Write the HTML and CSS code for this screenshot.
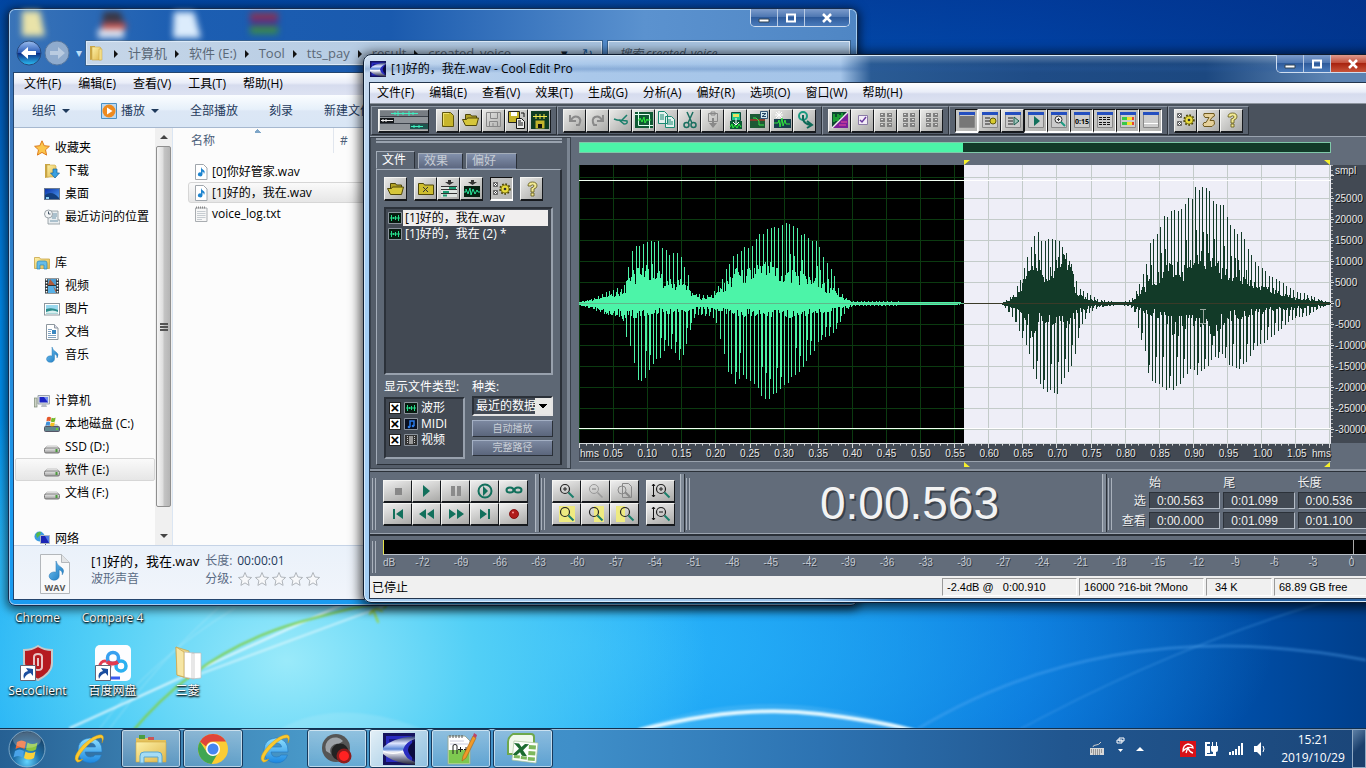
FILE: index.html
```html
<!DOCTYPE html>
<html lang="zh-CN">
<head>
    <meta charset="UTF-8">
    <meta name="viewport" content="width=device-width, initial-scale=1.0">
    <title>Cool Edit Pro</title>
    <link rel="stylesheet" href="styles.css">
</head>
<body>
    <!-- 图标库 -->
    <svg class="sprite" aria-hidden="true">
        <defs>
            <linearGradient id="g-folder" x1="0" y1="0" x2="1" y2="1"><stop offset="0" stop-color="#fdf1a8"/><stop offset="1" stop-color="#dfb64a"/></linearGradient>
            <linearGradient id="g-blue" x1="0" y1="0" x2="1" y2="1"><stop offset="0" stop-color="#7cc8f5"/><stop offset="1" stop-color="#1274bd"/></linearGradient>
            <linearGradient id="g-ie" x1="0" y1="0" x2="0" y2="1"><stop offset="0" stop-color="#8fe0ff"/><stop offset="1" stop-color="#1a86e0"/></linearGradient>
            <linearGradient id="g-screen" x1="0" y1="0" x2="1" y2="1"><stop offset="0" stop-color="#0a2fa8"/><stop offset="1" stop-color="#4ea0f0"/></linearGradient>
            <linearGradient id="g-drive" x1="0" y1="0" x2="0" y2="1"><stop offset="0" stop-color="#eeeeee"/><stop offset="1" stop-color="#999999"/></linearGradient>
            <radialGradient id="g-orb" cx=".5" cy=".85" r=".9"><stop offset="0" stop-color="#63d4ff"/><stop offset=".4" stop-color="#1f6fa8"/><stop offset="1" stop-color="#16314e"/></radialGradient>
            <linearGradient id="g-nav" x1="0" y1="0" x2="0" y2="1"><stop offset="0" stop-color="#9dbff0"/><stop offset=".48" stop-color="#2a5cb8"/><stop offset=".52" stop-color="#0b2f86"/><stop offset="1" stop-color="#2cc0f5"/></linearGradient>
            <linearGradient id="g-chrome" x1="0" y1="0" x2="0" y2="1"><stop offset="0" stop-color="#20306a"/><stop offset=".25" stop-color="#dfe6ff"/><stop offset=".45" stop-color="#5a86d8"/><stop offset=".55" stop-color="#f4f4fa"/><stop offset=".75" stop-color="#8c90a8"/><stop offset="1" stop-color="#1c1c30"/></linearGradient>
        </defs>
        <symbol id="star" viewBox="0 0 16 16"><path d="M8 .8l2.200 4.900 5.200.6-3.900 3.500 1.100 5.300L8 12.400l-4.600 2.700 1.100-5.300L.6 6.300l5.200-.6z" fill="#fbc64c" stroke="#dd7b1c"/></symbol>
        <symbol id="star-empty" viewBox="0 0 16 16"><path d="M8 1.500l1.900 4.500 4.700.5-3.500 3.100 1 4.800L8 11.900l-4.100 2.500 1-4.800-3.500-3.100 4.700-.5z" fill="#f7f8fa" stroke="#b0b5bb"/></symbol>
        <symbol id="folder" viewBox="0 0 16 16"><path d="M1 1h5v13l-5 1z" fill="#c9a545"/><path d="M3 2h8l1 1v12H3z" fill="url(#g-folder)" stroke="#c9a545" stroke-width=".6"/><path d="M10 4h3v11h-3z" fill="#f3dd86" stroke="#c9a545" stroke-width=".5"/></symbol>
        <symbol id="download" viewBox="0 0 16 16"><path d="M1 1h5v13l-5 1z" fill="#c9a545"/><path d="M3 2h8l1 1v11H3z" fill="url(#g-folder)" stroke="#c9a545" stroke-width=".6"/><path d="M9 6h4v4h2.500L11 15 6.500 10H9z" fill="#3aa0e0" stroke="#14639c" stroke-width=".7"/></symbol>
        <symbol id="desk" viewBox="0 0 16 16"><rect x=".5" y="2.500" width="15" height="11" fill="url(#g-screen)" stroke="#6a7a90"/><path d="M1 9q7-5 14 3v1H1z" fill="#123f7d"/><path d="M2 11h3v2H2z" fill="#8fd0f5"/></symbol>
        <symbol id="recent" viewBox="0 0 16 16"><path d="M5 2h9v9h2v4H4V7z" fill="#e8edf0" stroke="#8b949b" stroke-width=".8"/><path d="M8 5h5M8 7h5M8 9h4M6 12h8" stroke="#6e94aa"/><circle cx="4.500" cy="5" r="4" fill="#f4f6f7" stroke="#9aa2a8"/><path d="M4.500 2.500V5h2" stroke="#456" fill="none"/></symbol>
        <symbol id="library" viewBox="0 0 16 16"><path d="M.5 2.500h5l1 1.500h9v9.500H.5z" fill="url(#g-folder)" stroke="#c9a545" stroke-width=".8"/><path d="M3 14V8q0-2 2-2h6q2 0 2 2v6h-3V10H6v4z" fill="#66bce8" stroke="#2c86b8" stroke-width=".7"/></symbol>
        <symbol id="video" viewBox="0 0 16 16"><rect x="1" y=".5" width="14" height="15" fill="#2d3438"/><path d="M4 1h8v6H4z" fill="#4b9bd0"/><path d="M4 8h8v7H4z" fill="#57b0e6"/><path d="M6 1l5 6H4zM9 8l3 4v3z" fill="#b05a3a"/><path d="M2.500 1v14M13.500 1v14" stroke="#fff" stroke-width="1.500" stroke-dasharray="1.500 1.500"/></symbol>
        <symbol id="picture" viewBox="0 0 16 16"><rect x=".5" y="2.500" width="15" height="11.500" fill="#fff" stroke="#8d979e"/><path d="M2 4h12v8.500H2z" fill="#9ad8ee"/><path d="M2 8q6-2 12 1v3.500H2z" fill="#2c8c8c"/><path d="M2 11q7-3 12 0v1.500H2z" fill="#d7efef"/></symbol>
        <symbol id="doc" viewBox="0 0 16 16"><path d="M2.500.5h8l3.500 3.500v11.500H2.500z" fill="#fff" stroke="#8d979e"/><path d="M10.500.5V4H14" fill="#dde" stroke="#8d979e"/><path d="M4 5.500h4M4 7.500h3M4 9.500h3M4 11.500h8M4 13.500h8" stroke="#7fa2c0"/><path d="M8 6h4v4H8z" fill="#3b87c0"/></symbol>
        <symbol id="note" viewBox="0 0 16 16"><path d="M8 0q.5 3 4 5t1 6q.5-3-2.500-4v5a4 3.300 0 1 1-2.500-3z" fill="url(#g-blue)" stroke="#1d6fae" stroke-width=".4"/></symbol>
        <symbol id="computer" viewBox="0 0 16 16"><path d="M4 2.500h11.500V11H4z" fill="#dfe3e8" stroke="#9aa3ad"/><path d="M5.500 4H14v5.500H5.500z" fill="#1d24c4"/><path d="M10 4h4v5.500z" fill="#6f8cf0"/><path d="M8 11h4l1 3H7z" fill="#b8bdc4"/><rect x=".5" y="5" width="2.500" height="9" fill="#ccd2c6" stroke="#7d8a76" stroke-width=".7"/></symbol>
        <symbol id="drive" viewBox="0 0 16 16"><path d="M3 7h10l2.500 2.500h-15z" fill="#f1f1f1" stroke="#a9a9a9" stroke-width=".6"/><rect x=".5" y="9" width="15" height="5" rx="1.500" fill="url(#g-drive)" stroke="#777"/><path d="M11.500 10h2v3h-2z" fill="#4c9a3c"/></symbol>
        <symbol id="sysdrive" viewBox="0 0 16 16"><path d="M2 8h11l2.500 3h-15z" fill="#c9ced1"/><rect x=".5" y="10.500" width="15" height="5" rx="1" fill="#62878f" stroke="#556"/><path d="M12 12h2v2h-2z" fill="#6c3"/><path d="M3 1.500q2-1.500 4 0l-.6 4q-2-1.500-4 0z" fill="#e5582b"/><path d="M7.600 1.700q2 1 4-.2l-.7 4q-2 1.200-4 0z" fill="#76b82a"/><path d="M2.200 6.200q2-1.500 4 0l-.6 3.500q-2-1-4 0z" fill="#3f8fd8"/><path d="M6.800 6.400q2 1 4-.2l-.6 3.500q-2 1-4 0z" fill="#f5c020"/></symbol>
        <symbol id="network" viewBox="0 0 16 16"><circle cx="5.500" cy="5.500" r="5" fill="#3c9be0"/><path d="M2 3q3-3 5-2l-1 3-3 3zM7 6l3-1-1 4-2 1z" fill="#54b948"/><path d="M6.500 4.500h9v8h-9z" fill="#1b24b5" stroke="#aeb6c0"/><path d="M11 5h4v7z" fill="#4c78e8"/><path d="M9 15.500h5M11.500 13v2" stroke="#667"/></symbol>
        <symbol id="wavfile" viewBox="0 0 16 16"><path d="M2.500.5h8l3.500 3.500v11.500H2.500z" fill="#fff" stroke="#a0a6ac"/><path d="M8 3q.5 2 2.500 3t.5 4q0-2-1.500-2.500v3a2.300 2 0 1 1-1.500-2z" fill="#1d84cf"/></symbol>
        <symbol id="txtfile" viewBox="0 0 16 16"><path d="M2.500 2h11.500v13.500H2.500z" fill="#f7f7f7" stroke="#a9adb1"/><path d="M4 5.500h8.500M4 7.500h8.500M4 9.500h8.500M4 11.500h8.500M4 13.500h5" stroke="#b9c0c6" stroke-width=".8"/><path d="M3 1.500h10" stroke="#888" stroke-width="2" stroke-dasharray="1 1"/></symbol>
        <symbol id="logo" viewBox="0 0 32 32"><path fill="#15135e" d="M0 0h32v32H0z"/><path d="M3 3h26v26H3z" fill="#2a2cc0"/><path d="M6 6h20v3H6z" fill="#1a1a88"/><path d="M32 3Q8 5 0 15v6q10 9 32 11v-3Q22 26 20 17 22 9 32 6z" fill="url(#g-chrome)"/><path d="M32 8Q18 16 32 27z" fill="#0b0b40"/><path d="M0 18q10 5 20 0" stroke="#fff" fill="none"/></symbol>
        <!-- 工具栏 -->
        <symbol id="t-new" viewBox="0 0 18 18"><path d="M3.500 1.500h8l3 3v11h-11z" fill="#c7b52c" stroke="#5d5410"/><path d="M4 2h6v1H5v11H4z" fill="#ede16a"/></symbol>
        <symbol id="t-open" viewBox="0 0 18 18"><path d="M3.500 14V3.500h5l1 1.500h5v4" fill="#b3a226" stroke="#4e4609"/><path d="M.5 8.500h4l1-1.500h11l-2 7.500h-11z" fill="#d6c63a" stroke="#4e4609"/></symbol>
        <symbol id="t-save" viewBox="0 0 18 18"><path d="M1.500 1.500h14v14h-14zM5.500 1.500v6h7v-6M4.500 15.500v-5h8v5M8 12v3" fill="none" stroke="#888"/></symbol>
        <symbol id="t-saveas" viewBox="0 0 18 18"><path d="M.5.5h11v11H.5z" fill="#c5b42c" stroke="#222"/><path d="M3 1h6v4H3z" fill="#fff"/><path d="M8.500 7.500h5l3 3v7h-8z" fill="#eee" stroke="#111"/><path d="M10 10h3M10 12h5M10 14h5" stroke="#111"/><path d="M13 2h3v4" fill="none" stroke="#111"/></symbol>
        <symbol id="t-saveall" viewBox="0 0 18 18"><path d="M0 0h18v18H0z" fill="#0d3b22"/><path d="M2 5.500h14M5 3v5M9 3v5M13 3v5" stroke="#f2e84c" fill="none"/><path d="M4.500 9.500h9v8h-9z" fill="#c3b42c"/><path d="M7 13h4v4H7z" fill="#111"/></symbol>
        <symbol id="t-multi" viewBox="0 0 48 20"><path d="M0 0h48v20H0z" fill="#8f9499"/><path d="M0 6.500h48M0 13.500h48" stroke="#3b4149"/><path d="M0 1h48v5H0z" fill="#777d83"/><path d="M0 8h14v5H0z" fill="#14171a"/><path d="M30 14h18v5H30z" fill="#20544e"/><path d="M11 3.500h27M15 2v3M18 1v5M23 2v3M29 1v5M33 2v3" stroke="#3ff0c0"/><path d="M1 10.500h12M3 9v3M6 9v3" stroke="#eee"/><path d="M31 16.500h12M34 15v3M39 15v3" stroke="#3ff0c0"/></symbol>
        <symbol id="t-undo" viewBox="0 0 18 18"><path d="M4 4v6h6M5 9q3-5 7-3t1 8h-3" fill="none" stroke="#8a8a8a" stroke-width="2"/></symbol>
        <symbol id="t-redo" viewBox="0 0 18 18"><path d="M14 4v6H8M13 9q-3-5-7-3t-1 8h3" fill="none" stroke="#8a8a8a" stroke-width="2"/></symbol>
        <symbol id="t-trim" viewBox="0 0 18 18"><path d="M2 8q5 2 8 1l5-5M7 9l8 1q1 3-3 3L7 9" fill="none" stroke="#1a7f6b" stroke-width="1.500"/></symbol>
        <symbol id="t-crop" viewBox="0 0 18 18"><path d="M0 1h18v16H0z" fill="#0f5a34"/><path d="M3.500 0v14.500H18M0 3.500h14.500V18" fill="none" stroke="#dfe"/><path d="M3 9h2V7l2 4 2-5 1 6 2-4v1h4" fill="none" stroke="#2cf03c"/></symbol>
        <symbol id="t-copy" viewBox="0 0 18 18"><path d="M.5.5h6l3 3v9h-9zM7.500 5.500h6l3 3v8h-9z" fill="#e4f2ee" stroke="#1a8a72"/><path d="M2 4h4M2 6h4M2 8h4M9 9h4M9 11h6M9 13h6" stroke="#1a8a72"/></symbol>
        <symbol id="t-cut" viewBox="0 0 18 18"><path d="M6 1l5 11M12 1L7 12" stroke="#1a6f60" stroke-width="1.500"/><circle cx="5.500" cy="14" r="2.500" fill="none" stroke="#1a6f60" stroke-width="1.500"/><circle cx="12.500" cy="14" r="2.500" fill="none" stroke="#1a6f60" stroke-width="1.500"/></symbol>
        <symbol id="t-paste" viewBox="0 0 18 18"><path d="M4.500 2.500h9v8h-9zM7 1h4v3H7z" fill="none" stroke="#888"/><path d="M8 7h2v5h3l-4 5-4-5h3z" fill="#888"/></symbol>
        <symbol id="t-mix" viewBox="0 0 18 18"><path d="M4.500 1.500h9v8h-9z" fill="#1fc48a" stroke="#0e4a38"/><path d="M6 3h6v3H6z" fill="#e9e060"/><path d="M3 10h12v8H3z" fill="#0b5a34"/><path d="M9 7v7M6 11l3 3 3-3" stroke="#fff" fill="none"/><path d="M3 16l2-3 1 4 2-3 2 3 2-4 2 3" stroke="#2cf03c" fill="none"/></symbol>
        <symbol id="t-zero" viewBox="0 0 18 18"><path d="M0 3h15v14H0z" fill="#1d5a34"/><path d="M0 9h15" stroke="#e22"/><path d="M3 7h3l3 3v4h5" stroke="#38e048" fill="none"/><path d="M10.500.5h7v7h-7z" fill="#d5eaf0" stroke="#357"/><path d="M12 2.500h4l-4 3h4" stroke="#246" fill="none"/></symbol>
        <symbol id="t-spark" viewBox="0 0 18 18"><path d="M1 8h17v9H1z" fill="#163f4c"/><path d="M1 12h4l1-3 1 7 2-9 1 8 2-6 1 4h4" stroke="#32e63e" fill="none"/><path d="M6 0v8M2 4h8M3 1l6 6M9 1L3 7" stroke="#fff"/></symbol>
        <symbol id="t-conv" viewBox="0 0 18 18"><circle cx="7" cy="5" r="4" fill="none" stroke="#1a9a80" stroke-width="2"/><path d="M7 4v4q1 5 8 6M11 10l5 4-5 3" fill="none" stroke="#0e6a58" stroke-width="2"/></symbol>
        <symbol id="t-spec" viewBox="0 0 18 18"><path d="M1 1h16v16H1z" fill="#0d4a30"/><path d="M17 1v16H1z" fill="#7a1f9a"/><path d="M17 1L1 17" stroke="#eee" stroke-width="1.500"/><path d="M3 3v8M5 6v4M7 3v7M9 4v3M11 2v4" stroke="#2cf03c"/><path d="M8 14h7M10 11h6" stroke="#f04a9a"/></symbol>
        <symbol id="t-check" viewBox="0 0 18 18"><path d="M4.500 4.500h9v9h-9z" fill="#f3edf7" stroke="#8a7aa5"/><path d="M6 9l2 2 4-5" fill="none" stroke="#6a3aa0" stroke-width="1.500"/></symbol>
        <symbol id="t-grid" viewBox="0 0 18 18"><path d="M3 2h5v4H3zM10 2h5v4h-5zM3 7h5v4H3zM10 7h5v4h-5zM3 12h5v4H3zM10 12h5v4h-5z" fill="#808080"/><path d="M4 3.500h2M12 3.500h2M4 8.500h2M12 8.500h2M4 13.500h2M12 13.500h2" stroke="#ddd"/></symbol>
        <symbol id="t-win" viewBox="0 0 18 18"><path d="M1.500 1.500h15v15h-15z" fill="#ccc" stroke="#888"/><path d="M1 1h16v3H1z" fill="#244fc0"/></symbol>
        <symbol id="t-winfull" viewBox="0 0 18 18"><use href="#t-win"/><path d="M2 5h14v11H2z" fill="#777"/></symbol>
        <symbol id="t-winfind" viewBox="0 0 18 18"><use href="#t-win"/><path d="M4 7h5M4 10h5M4 13h5" stroke="#222"/><circle cx="12" cy="10" r="3" fill="#d8cb2e" stroke="#625a08"/></symbol>
        <symbol id="t-winlist" viewBox="0 0 18 18"><use href="#t-win"/><path d="M4 7h5M4 10h5M4 13h5" stroke="#222"/><path d="M10 6l5 4-5 4z" fill="#9cc4b8" stroke="#1a5a4c"/></symbol>
        <symbol id="t-winplay" viewBox="0 0 18 18"><use href="#t-win"/><path d="M7 5l6 5-6 5z" fill="#12705c"/></symbol>
        <symbol id="t-winzoom" viewBox="0 0 18 18"><use href="#t-win"/><circle cx="8.500" cy="8.500" r="3.500" fill="#eee" stroke="#333"/><path d="M7 8.500h3M8.500 7v3" stroke="#333"/><path d="M11 11l4 4" stroke="#1a9a80" stroke-width="2"/></symbol>
        <symbol id="t-wineee" viewBox="0 0 18 18"><use href="#t-win"/><path d="M3 6.500h12M3 8.500h12M3 11.500h12M3 13.500h12" stroke="#111" stroke-dasharray="3 1"/></symbol>
        <symbol id="t-winlevel" viewBox="0 0 18 18"><use href="#t-win"/><path d="M3 6h6v3H3zM3 11h6v3H3z" fill="#38c848"/><path d="M8 6h5v3H8zM8 11h5v3H8z" fill="#f2e030"/><path d="M13 6h2v3h-2zM13 11h2v3h-2z" fill="#e8452c"/></symbol>
        <symbol id="t-winstat" viewBox="0 0 18 18"><use href="#t-win"/><path d="M2 12.500h14" stroke="#fff"/></symbol>
        <symbol id="t-gear" viewBox="0 0 18 18"><path d="M.5 2.500h4v4h-4zM.5 10.500h4v4h-4z" fill="#fff" stroke="#333" stroke-width=".7"/><path d="M1 3l3 3M4 3L1 6M1 11l3 3M4 11l-3 3" stroke="#222" stroke-width=".7"/><circle cx="12" cy="9" r="4.500" fill="#e8db3c" stroke="#463f06" stroke-width="2.500" stroke-dasharray="1.500 1.500"/><circle cx="12" cy="9" r="4" fill="#e8db3c" stroke="#6b610c" stroke-width=".7"/><circle cx="12" cy="9" r="1.300" fill="#333"/></symbol>
        <symbol id="t-script" viewBox="0 0 18 18"><path d="M4 2.500h10q2 3-2 4l-2 3h4q2 4-2 6H4q-2-2 0-4h2l3-5H5q-2-2-1-4z" fill="#e5d09a" stroke="#6f5a20"/></symbol>
        <symbol id="t-help" viewBox="0 0 18 18"><path d="M5 6q0-4 4.500-4T14 6q0 2-3 3v3H8V8q3-.7 3-2t-1.500-1.200T8 6zM8 13h3v3H8z" fill="#f2ea94" stroke="#5f5714" stroke-width=".8"/></symbol>
        <symbol id="t-closef" viewBox="0 0 18 18"><path d="M1.500 3.500h5l1 1.500h9v9.500h-15z" fill="#cdbd30" stroke="#4e4609"/><path d="M6 7l5 5M11 7l-5 5" stroke="#333"/></symbol>
        <symbol id="t-insm" viewBox="0 0 18 18"><path d="M1 6h16v11H1z" fill="#dfe4e1"/><path d="M1 9.500h16M1 13.500h16M1 6.500h16" stroke="#333"/><path d="M9 8h7M3 12h6M3 15.500h4" stroke="#1a9a70" stroke-width="2"/><path d="M8 0h3v2h3l-4.500 3L5 2h3z" fill="#333"/></symbol>
        <symbol id="t-insw" viewBox="0 0 18 18"><path d="M1 6h16v11H1z" fill="#062012"/><path d="M1 12h2V9l2 5 2-6 1 7 2-6 2 5 2-4 1 2h2" stroke="#28e49a" fill="none"/><path d="M8 0h3v2h3l-4.500 3L5 2h3z" fill="#333"/></symbol>
        <symbol id="w-wave" viewBox="0 0 14 12"><path d="M.5.5h13v11H.5z" fill="#071a10" stroke="#8a929c"/><path d="M3.500 3v6M5.500 5v2M7.500 4v4M10.500 3v6M2 6h10" stroke="#27dd8c" fill="none"/></symbol>
        <symbol id="w-midi" viewBox="0 0 14 12"><path d="M.5.5h13v11H.5z" fill="#091020" stroke="#8a929c"/><path d="M6 9V3h4v5" stroke="#2a7ae8" fill="none" stroke-width="1.500"/><circle cx="5" cy="9" r="1.300" fill="#2a7ae8"/><circle cx="9" cy="8" r="1.300" fill="#2a7ae8"/></symbol>
        <symbol id="w-video" viewBox="0 0 14 12"><path d="M.5.5h13v11H.5z" fill="#333" stroke="#8a929c"/><path d="M5 2h4v8H5z" fill="#999"/><path d="M3.500 2v8M10.500 2v8" stroke="#ccc" stroke-dasharray="1 1"/></symbol>
        <!-- 走带控制 -->
        <symbol id="p-stop" viewBox="0 0 20 18"><path d="M7 6h7v7H7z" fill="#888"/></symbol>
        <symbol id="p-play" viewBox="0 0 20 18"><path d="M6 3l7 6-7 6z" fill="#12705c"/></symbol>
        <symbol id="p-pause" viewBox="0 0 20 18"><path d="M5 4h4v10H5zM11 4h4v10h-4z" fill="#8b8b8b"/></symbol>
        <symbol id="p-loop" viewBox="0 0 20 18"><circle cx="10" cy="9" r="6.500" fill="none" stroke="#12705c" stroke-width="2"/><path d="M8 4l5 5-5 5z" fill="#12705c"/></symbol>
        <symbol id="p-inf" viewBox="0 0 20 18"><ellipse cx="6" cy="8" rx="3.500" ry="2.500" fill="none" stroke="#12705c" stroke-width="2"/><ellipse cx="14" cy="8" rx="3.500" ry="2.500" fill="none" stroke="#12705c" stroke-width="2"/></symbol>
        <symbol id="p-first" viewBox="0 0 20 18"><path d="M5 4h2v10H5zM15 4v10L8 9z" fill="#12705c"/></symbol>
        <symbol id="p-rew" viewBox="0 0 20 18"><path d="M9 4v10L2 9zM17 4v10l-7-5z" fill="#12705c"/></symbol>
        <symbol id="p-fwd" viewBox="0 0 20 18"><path d="M3 4v10l7-5zM11 4v10l7-5z" fill="#12705c"/></symbol>
        <symbol id="p-last" viewBox="0 0 20 18"><path d="M5 4v10l7-5zM13 4h2v10h-2z" fill="#12705c"/></symbol>
        <symbol id="p-rec" viewBox="0 0 20 18"><circle cx="10" cy="9" r="4.500" fill="#b01c1c" stroke="#700" stroke-width=".8"/><circle cx="9" cy="7.500" r="1" fill="#f99"/></symbol>
        <symbol id="z-lens" viewBox="0 0 20 18"><circle cx="8" cy="7" r="4.500" fill="none" stroke="#222" stroke-width="1.200"/><path d="M11.500 10.500l5 5" stroke="#1a7f6b" stroke-width="2"/></symbol>
        <symbol id="z-in" viewBox="0 0 20 18"><use href="#z-lens"/><path d="M6 7h4M8 5v4" stroke="#222"/></symbol>
        <symbol id="z-out" viewBox="0 0 20 18"><circle cx="8" cy="7" r="4.500" fill="none" stroke="#999"/><path d="M6 7h4M11.500 10.500l5 5" stroke="#999" stroke-width="1.500"/></symbol>
        <symbol id="z-full" viewBox="0 0 20 18"><path d="M7.500 1.500h6l3 3v11h-9z" fill="none" stroke="#888"/><circle cx="7" cy="8" r="4" fill="none" stroke="#888"/><path d="M10 10l5 5" stroke="#888" stroke-width="2"/></symbol>
        <symbol id="z-sel" viewBox="0 0 20 18"><path d="M2 1h16v16H2z" fill="#eeea80"/><use href="#z-lens"/></symbol>
        <symbol id="z-left" viewBox="0 0 20 18"><path d="M8 1h10v16H8z" fill="#eeea80"/><use href="#z-lens"/></symbol>
        <symbol id="z-right" viewBox="0 0 20 18"><path d="M1 1h9v16H1z" fill="#eeea80"/><use href="#z-lens" x="2"/></symbol>
        <symbol id="z-vin" viewBox="0 0 20 18"><path d="M2.500 2v13M1 4l1.500-2L4 4M1 13l1.500 2L4 13" stroke="#111" fill="none"/><use href="#z-in" x="2"/></symbol>
        <symbol id="z-vout" viewBox="0 0 20 18"><path d="M2.500 2v13M1 4l1.500-2L4 4M1 13l1.500 2L4 13M8 7h4" stroke="#111" fill="none"/><use href="#z-lens" x="2"/></symbol>
        <!-- 任务栏 -->
        <symbol id="b-orb" viewBox="0 0 38 38"><circle cx="19" cy="19" r="18" fill="url(#g-orb)" stroke="#9fc4dd" stroke-opacity=".7"/><path d="M9 12q4.500-3 9 0l-1.500 7q-4.500-3-9 0z" fill="#ee6a33"/><path d="M19.500 12.500q5 3 10 0L28 19.500q-5 3-10 0z" fill="#8cc63f"/><path d="M7 21q4.500-3 9 0l-1.500 6.500q-4.500-3-9 0z" fill="#4aa3e8"/><path d="M17.500 21.500q5 3 10 0L26 28q-5 3-10 0z" fill="#fbd13a"/><ellipse cx="19" cy="10" rx="14" ry="8" fill="#fff" opacity=".22"/></symbol>
        <symbol id="b-ie" viewBox="0 0 32 32"><path d="M29 19H12q.5 5 5.500 5 3.500 0 4.500-2h6.500q-2.500 8-11.500 8Q5 29 5 17.500T17 5Q29.500 6 29 19zM12 14h10.500q-.5-4-5.200-4T12 14z" fill="url(#g-ie)" stroke="#2277c0" stroke-width=".6"/><path d="M4 29Q-2 25 10 12 23 0 29 2q3 2 0 8 1-6-2-5-5 0-13 8T5 26q0 2 5 0-4 4-6 3z" fill="#fbc92f" stroke="#c99312" stroke-width=".4"/></symbol>
        <symbol id="b-folder" viewBox="0 0 32 32"><path d="M1 5h12l2 2h16v20H1z" fill="#e4c25c"/><path d="M4 2h6v4H4z" fill="#4a9e42"/><path d="M13 4h6v3h-6z" fill="#c55"/><path d="M1 9h30v20H1z" fill="url(#g-folder)" stroke="#d0a840" stroke-width=".6"/><path d="M5 30V23q0-4 4-4h14q4 0 4 4v7h-4v-6H9v6z" fill="#a5dcf5" stroke="#5aa6d0"/></symbol>
        <symbol id="b-chrome" viewBox="0 0 32 32"><circle cx="16" cy="16" r="15" fill="#fbcc34"/><path d="M3 8.500A15 15 0 0 1 29 8.500H16a7.500 7.500 0 0 0-7 5z" fill="#e0453a"/><path d="M3 8.500A15 15 0 0 0 14.500 31l6.500-11a7 7 0 0 1-11-.5z" fill="#3fa652"/><circle cx="16" cy="16" r="7" fill="#fff"/><circle cx="16" cy="16" r="5.500" fill="#4586f0"/></symbol>
        <symbol id="b-rec" viewBox="0 0 32 32"><circle cx="15" cy="15" r="14" fill="#555"/><path d="M5 18a10 10 0 0 1 17-10l-4 3a7 7 0 0 0-8 10z" fill="#9ea3a8"/><circle cx="19" cy="19" r="8.500" fill="#222"/><circle cx="23" cy="23" r="7.500" fill="#8d1d1d"/><circle cx="23" cy="23" r="5" fill="#f22"/></symbol>
        <symbol id="b-npp" viewBox="0 0 32 32"><path d="M3 3h17l5 5v23H3z" fill="#fff" stroke="#9a9"/><path d="M3.500 17h21v13.500h-21z" fill="#7ec850"/><path d="M5 2v3M8 2v3M11 2v3M14 2v3M17 2v3" stroke="#555"/><path d="M5 8h14M5 11h18" stroke="#ccd"/><path d="M8 21v-8q0-1.500 2-1.500t2 1.500v8M13 16.500h5M15.500 14v5M19 16.500h4M21 14v5" stroke="#222" fill="none"/><path d="M28 3l3 2-10 20-4 3 1-5z" fill="#f09a2a" stroke="#a55f12" stroke-width=".6"/><path d="M28 3l3 2 1-3-3-2z" fill="#b46"/></symbol>
        <symbol id="b-excel" viewBox="0 0 32 32"><path d="M6 1h18q3 0 3 3v17H1V9q0-5 5-8z" fill="#f1f8ec" stroke="#6ea84c" stroke-width="2"/><path d="M7 8l24 2-2 20-24-3z" fill="#fdfefc" stroke="#a9c69a" stroke-width=".7"/><path d="M22 12l7 .6-.3 4-7-.6zM21.500 18l7 .5-.3 4-7-.6zM21 24l7 .6-.3 3.500-7-.7zM14 23l6 .7-.3 3-6-.6zM7 22l6 .6-.3 3-6-.7z" fill="#7db85c"/><path d="M7 10l5 .4 2.500 3.500 3.500-3 4 .3-6 6 4 6-5-.5-2-3.500-3.500 3-4-.5 6.500-6z" fill="#1c6b30"/></symbol>
        <symbol id="d-link" viewBox="0 0 16 16"><path d="M.5.5h15v15H.5z" fill="#fff" stroke="#667"/><path d="M4 14Q2 7 8 6L6 3l7 1v7l-2.500-3Q6 9 4 14z" fill="#1b4e9e"/></symbol>
        <symbol id="d-seco" viewBox="0 0 36 36"><path d="M18 1q6 4 14 4v13q0 10-14 17Q4 28 4 18V5q8 0 14-4z" fill="#b51a20" stroke="#c9c9c9" stroke-width="2"/><path d="M14 20v-8q0-3 4-3t4 3v8M14 16v6q0 3 4 3t4-3v-4M18 13v8" stroke="#e8c4c4" stroke-width="2" fill="none"/></symbol>
        <symbol id="d-baidu" viewBox="0 0 36 36"><rect width="36" height="36" rx="5" fill="#fdfdff"/><path d="M14 33h11" stroke="#3a5af0" stroke-width="3"/><circle cx="10" cy="21" r="5" fill="none" stroke="#e33a50" stroke-width="3"/><circle cx="26" cy="21" r="5" fill="none" stroke="#2bb0f0" stroke-width="3.500"/><circle cx="18" cy="13" r="5.500" fill="none" stroke="#38a0f0" stroke-width="3.500"/><path d="M12 17q6 3 11 0" stroke="#e33a50" stroke-width="4" fill="none"/></symbol>
        <symbol id="d-folder" viewBox="0 0 36 36"><path d="M6 2l13 4v28l-12-4z" fill="#ecd583" stroke="#c8a44a" stroke-width=".7"/><path d="M14 7l10 1v26l-10-2zM22 8h9v25l-9 1z" fill="#fff" stroke="#bbb" stroke-width=".7"/><path d="M6 2l8 5v25l-7-2z" fill="#f6e6a4" stroke="#c8a44a" stroke-width=".7"/></symbol>
    </svg>

    <div class="desktop">
        <svg class="wallpaper" viewBox="0 0 1366 768" preserveAspectRatio="none" aria-hidden="true">
            <g fill="none" stroke-linecap="round">
                <path d="M70 728L440 560" stroke="#fff" stroke-opacity=".75" stroke-width="2"/>
                <path d="M100 728Q150 660 235 608M110 728Q160 660 220 606" stroke="#fff" stroke-opacity=".3"/>
                <path d="M200 674L400 600" stroke="#fff" stroke-opacity=".5" stroke-width="2"/>
                <path d="M132 732Q200 650 300 622T384 608" stroke="#7fd04a" stroke-width="2"/>
                <path d="M370 614q4-8 12-3M374 612l4 10" stroke="#9ad642" stroke-width="2"/>
                <path d="M640 730Q740 704 820 714T930 736" stroke="#dff6ff" stroke-width="4"/>
                <path d="M900 740Q1100 610 1366 660" stroke="#5fb0f5" stroke-opacity=".35" stroke-width="3"/>
                <path d="M1000 740Q1180 640 1366 590" stroke="#5fb0f5" stroke-opacity=".25" stroke-width="2"/>
            </g>
            <path d="M270 735Q330 694 420 728v10z" fill="#fff" fill-opacity=".12"/>
            <path d="M560 768Q760 640 1000 768z" fill="#fff" fill-opacity=".1"/>
        </svg>

        <ul class="shortcuts">
            <li>Chrome</li>
            <li>Compare 4</li>
            <li></li>
            <li><span class="pic"><svg><use href="#d-seco"/></svg><svg class="link"><use href="#d-link"/></svg></span>SecoClient</li>
            <li><span class="pic"><svg><use href="#d-baidu"/></svg><svg class="link"><use href="#d-link"/></svg></span>百度网盘</li>
            <li><span class="pic"><svg><use href="#d-folder"/></svg></span>三菱</li>
        </ul>

        <!-- 资源管理器 -->
        <section class="explorer">
            <header class="ex-glass">
                <svg class="ghosts" viewBox="0 0 300 32" aria-hidden="true">
                    <path d="M8 2h18l5 25H8z" fill="#e9e3a9"/><path d="M90 3h16l4 10H88z" fill="#3a3540"/><path d="M88 14h24v6H88z" fill="#c84a3c"/><path d="M84 20h26v9H84z" fill="#dce4f2"/><path d="M160 3h20l7 26h-28z" fill="#dcecfc"/><path d="M236 4h28v7h-28z" fill="#8a3350"/><path d="M236 11h28v6h-28z" fill="#40349a"/><path d="M236 17h28v8h-28z" fill="#3a8a4c"/>
                </svg>
                <div class="win-buttons">
                    <button aria-label="最小化"><svg viewBox="0 0 12 10"><path d="M1 6h10v3H1z" fill="#fff" stroke="#345"/></svg></button>
                    <button aria-label="最大化"><svg viewBox="0 0 12 10"><path d="M2 1.500h8v7H2z" fill="none" stroke="#fff" stroke-width="2"/></svg></button>
                    <button class="wide" aria-label="关闭"><svg viewBox="0 0 12 10"><path d="M2 1l8 8M10 1L2 9" stroke="#fff" stroke-width="2.500"/></svg></button>
                </div>
                <div class="ex-address">
                    <button class="round" aria-label="后退"><svg viewBox="0 0 26 26"><circle cx="13" cy="13" r="12" fill="url(#g-nav)" stroke="#274a7c"/><path d="M5 13l7-6v4h8v4h-8v4z" fill="#fff"/></svg></button>
                    <button class="round" aria-label="前进"><svg viewBox="0 0 26 26"><circle cx="13" cy="13" r="12" fill="#8fabcd" stroke="#56779f"/><path d="M21 13l-7-6v4H6v4h8v4z" fill="#b9cbe0"/></svg></button>
                    <i class="drop">▾</i>
                    <nav class="crumbs">
                        <svg><use href="#folder"/></svg>
                        <a href="#">计算机</a><a href="#">软件 (E:)</a><a href="#">Tool</a><a href="#">tts_pay</a><a href="#">result</a><a href="#">created_voice</a>
                        <i class="end">▾</i><i>↻</i>
                    </nav>
                    <input class="search" type="search" aria-label="搜索" placeholder="搜索 created_voice">
                </div>
            </header>
            <div class="ex-client">
                <nav class="menu">
                    <button>文件(F)</button><button>编辑(E)</button><button>查看(V)</button><button>工具(T)</button><button>帮助(H)</button>
                </nav>
                <div class="ex-tools">
                    <button>组织 <b></b></button>
                    <button class="play"><svg viewBox="0 0 16 16"><path d="M.5.5h15v15H.5z" fill="#bcd8f0" stroke="#4a90c4"/><circle cx="8" cy="8" r="6.500" fill="#ee8a1e"/><path d="M6 4.500l5.500 3.500L6 11.500z" fill="#fff"/></svg>播放 <b></b></button>
                    <button>全部播放</button>
                    <button>刻录</button>
                    <button>新建文件夹</button>
                </div>
                <div class="ex-body">
                    <ul class="tree">
                        <li class="root"><svg><use href="#star"/></svg>收藏夹</li>
                        <li><svg><use href="#download"/></svg>下载</li>
                        <li><svg><use href="#desk"/></svg>桌面</li>
                        <li><svg><use href="#recent"/></svg>最近访问的位置</li>
                        <li></li>
                        <li class="root"><svg><use href="#library"/></svg>库</li>
                        <li><svg><use href="#video"/></svg>视频</li>
                        <li><svg><use href="#picture"/></svg>图片</li>
                        <li><svg><use href="#doc"/></svg>文档</li>
                        <li><svg><use href="#note"/></svg>音乐</li>
                        <li></li>
                        <li class="root"><svg><use href="#computer"/></svg>计算机</li>
                        <li><svg><use href="#sysdrive"/></svg>本地磁盘 (C:)</li>
                        <li><svg><use href="#drive"/></svg>SSD (D:)</li>
                        <li class="on"><svg><use href="#drive"/></svg>软件 (E:)</li>
                        <li><svg><use href="#drive"/></svg>文档 (F:)</li>
                        <li></li>
                        <li class="root"><svg><use href="#network"/></svg>网络</li>
                    </ul>
                    <div class="scroll"><i class="up"></i><span><b></b></span><i class="down"></i></div>
                    <div class="files">
                        <div class="files-head"><span>名称</span><span>#</span></div>
                        <a href="#"><svg><use href="#wavfile"/></svg>[0]你好管家.wav</a>
                        <a href="#" class="on"><svg><use href="#wavfile"/></svg>[1]好的，我在.wav</a>
                        <a href="#"><svg><use href="#txtfile"/></svg>voice_log.txt</a>
                    </div>
                </div>
                <footer class="details">
                    <svg class="big" viewBox="0 0 32 40"><path d="M1.500.5h21l8 8v31h-29z" fill="#f8f9fa" stroke="#b3b7bb"/><path d="M22.500.5v8h8" fill="#e2e4e6" stroke="#b3b7bb"/><use href="#note" x="7" y="6" width="20" height="22"/><text x="16" y="37" text-anchor="middle" font-size="9" font-weight="bold" fill="#555">WAV</text></svg>
                    <div><strong>[1]好的，我在.wav</strong><span>波形声音</span></div>
                    <dl>
                        <dt>长度:</dt><dd>00:00:01</dd>
                        <dt>分级:</dt><dd class="stars"><svg><use href="#star-empty"/></svg><svg><use href="#star-empty"/></svg><svg><use href="#star-empty"/></svg><svg><use href="#star-empty"/></svg><svg><use href="#star-empty"/></svg></dd>
                    </dl>
                </footer>
            </div>
        </section>

        <!-- Cool Edit Pro -->
        <section class="cool">
            <header class="cool-title">
                <svg><use href="#logo"/></svg>
                <h1>[1]好的，我在.wav - Cool Edit Pro</h1>
                <div class="win-buttons">
                    <button aria-label="最小化"><svg viewBox="0 0 12 10"><path d="M1 6h10v3H1z" fill="#fff" stroke="#345"/></svg></button>
                    <button aria-label="最大化"><svg viewBox="0 0 12 10"><path d="M2 1.500h8v7H2z" fill="none" stroke="#fff" stroke-width="2"/></svg></button>
                    <button class="wide red" aria-label="关闭"><svg viewBox="0 0 12 10"><path d="M2 1l8 8M10 1L2 9" stroke="#fff" stroke-width="2.500"/></svg></button>
                </div>
            </header>
            <div class="cool-client">
                <nav class="menu">
                    <button>文件(F)</button><button>编辑(E)</button><button>查看(V)</button><button>效果(T)</button><button>生成(G)</button><button>分析(A)</button><button>偏好(R)</button><button>选项(O)</button><button>窗口(W)</button><button>帮助(H)</button>
                </nav>
                <div class="toolbar">
                    <div class="group">
                        <button class="multi" aria-label="多轨"><svg><use href="#t-multi"/></svg></button>
                        <button aria-label="新建"><svg><use href="#t-new"/></svg></button>
                        <button aria-label="打开"><svg><use href="#t-open"/></svg></button>
                        <button aria-label="保存"><svg><use href="#t-save"/></svg></button>
                        <button aria-label="另存为"><svg><use href="#t-saveas"/></svg></button>
                        <button aria-label="全部保存"><svg><use href="#t-saveall"/></svg></button>
                    </div>
                    <div class="group">
                        <button aria-label="撤消"><svg><use href="#t-undo"/></svg></button>
                        <button aria-label="重做"><svg><use href="#t-redo"/></svg></button>
                        <button aria-label="重复"><svg><use href="#t-trim"/></svg></button>
                        <button aria-label="修剪"><svg><use href="#t-crop"/></svg></button>
                        <button aria-label="复制"><svg><use href="#t-copy"/></svg></button>
                        <button aria-label="剪切"><svg><use href="#t-cut"/></svg></button>
                        <button aria-label="粘贴"><svg><use href="#t-paste"/></svg></button>
                        <button aria-label="混合粘贴"><svg><use href="#t-mix"/></svg></button>
                        <button aria-label="零点"><svg><use href="#t-zero"/></svg></button>
                        <button aria-label="静音"><svg><use href="#t-spark"/></svg></button>
                        <button aria-label="转换"><svg><use href="#t-conv"/></svg></button>
                    </div>
                    <div class="group">
                        <button aria-label="频谱"><svg><use href="#t-spec"/></svg></button>
                        <button aria-label="标记"><svg><use href="#t-check"/></svg></button>
                        <button aria-label="组 1"><svg><use href="#t-grid"/></svg></button>
                        <button aria-label="组 2"><svg><use href="#t-grid"/></svg></button>
                        <button aria-label="组 3"><svg><use href="#t-grid"/></svg></button>
                    </div>
                    <div class="group">
                        <button class="down" aria-label="管理器"><svg><use href="#t-winfull"/></svg></button>
                        <button aria-label="提示列表"><svg><use href="#t-winfind"/></svg></button>
                        <button aria-label="播放列表"><svg><use href="#t-winlist"/></svg></button>
                        <button class="down" aria-label="走带"><svg><use href="#t-winplay"/></svg></button>
                        <button class="down" aria-label="缩放"><svg><use href="#t-winzoom"/></svg></button>
                        <button class="down" aria-label="时间"><svg viewBox="0 0 18 18"><use href="#t-win"/><text x="9" y="13" text-anchor="middle" font-size="7" font-weight="bold">0:15</text></svg></button>
                        <button class="down" aria-label="选区"><svg><use href="#t-wineee"/></svg></button>
                        <button class="down" aria-label="电平"><svg><use href="#t-winlevel"/></svg></button>
                        <button class="down" aria-label="状态栏"><svg><use href="#t-winstat"/></svg></button>
                    </div>
                    <div class="group">
                        <button aria-label="设置"><svg><use href="#t-gear"/></svg></button>
                        <button aria-label="脚本"><svg><use href="#t-script"/></svg></button>
                        <button aria-label="帮助"><svg><use href="#t-help"/></svg></button>
                    </div>
                </div>

                <div class="main">
                    <aside class="organizer">
                        <div class="tabs"><button class="on">文件</button><button>效果</button><button>偏好</button></div>
                        <div class="tab-body">
                            <div class="tab-tools">
                                <button aria-label="打开"><svg><use href="#t-open"/></svg></button>
                                <span>
                                    <button aria-label="关闭"><svg><use href="#t-closef"/></svg></button>
                                    <button aria-label="插入多轨"><svg><use href="#t-insm"/></svg></button>
                                    <button aria-label="编辑波形"><svg><use href="#t-insw"/></svg></button>
                                </span>
                                <button class="down" aria-label="选项"><svg><use href="#t-gear"/></svg></button>
                                <button aria-label="帮助"><svg><use href="#t-help"/></svg></button>
                            </div>
                            <ul class="wave-list">
                                <li class="on"><svg><use href="#w-wave"/></svg><span>[1]好的，我在.wav</span></li>
                                <li><svg><use href="#w-wave"/></svg><span>[1]好的，我在 (2) *</span></li>
                            </ul>
                            <div class="filter">
                                <div class="types">
                                    <p>显示文件类型:</p>
                                    <div class="sunken">
                                        <label><input type="checkbox" checked><svg><use href="#w-wave"/></svg>波形</label>
                                        <label><input type="checkbox" checked><svg><use href="#w-midi"/></svg>MIDI</label>
                                        <label><input type="checkbox" checked><svg><use href="#w-video"/></svg>视频</label>
                                    </div>
                                </div>
                                <div class="sort">
                                    <label for="sort">种类:</label>
                                    <div class="combo"><select id="sort"><option>最近的数据</option></select></div>
                                    <button>自动播放</button>
                                    <button>完整路径</button>
                                </div>
                            </div>
                        </div>
                    </aside>

                    <div class="editor">
                        <div class="view-bar"><i></i></div>
                        <svg class="marks" viewBox="0 0 752 5" preserveAspectRatio="none"><path d="M385 0h6l-6 5zM751 0h-6l6 5z" fill="#f6f02c"/></svg>
                        <svg class="wave" id="wave" viewBox="0 0 752 278" preserveAspectRatio="none"></svg>
                        <ol class="amp"><li class="unit">smpl</li><li>25000</li><li>20000</li><li>15000</li><li>10000</li><li>5000</li><li>0</li><li>-5000</li><li>-10000</li><li>-15000</li><li>-20000</li><li>-25000</li><li>-30000</li></ol>
                        <div class="time">
                            <svg id="ticks" viewBox="0 0 752 5" preserveAspectRatio="none"></svg>
                            <ol><li class="first">hms</li><li>0.05</li><li>0.10</li><li>0.15</li><li>0.20</li><li>0.25</li><li>0.30</li><li>0.35</li><li>0.40</li><li>0.45</li><li>0.50</li><li>0.55</li><li>0.60</li><li>0.65</li><li>0.70</li><li>0.75</li><li>0.80</li><li>0.85</li><li>0.90</li><li>0.95</li><li>1.00</li><li>1.05</li><li class="last">hms</li></ol>
                        </div>
                        <svg class="marks bottom" viewBox="0 0 752 5" preserveAspectRatio="none"><path d="M385 0v5h6zM751 0v5h-6z" fill="#f6f02c"/></svg>
                    </div>
                </div>

                <div class="dock">
                    <div class="pad transport">
                        <button aria-label="停止"><svg><use href="#p-stop"/></svg></button>
                        <button aria-label="播放"><svg><use href="#p-play"/></svg></button>
                        <button aria-label="暂停"><svg><use href="#p-pause"/></svg></button>
                        <button aria-label="播放到结尾"><svg><use href="#p-loop"/></svg></button>
                        <button aria-label="循环"><svg><use href="#p-inf"/></svg></button>
                        <button aria-label="开头"><svg><use href="#p-first"/></svg></button>
                        <button aria-label="快退"><svg><use href="#p-rew"/></svg></button>
                        <button aria-label="快进"><svg><use href="#p-fwd"/></svg></button>
                        <button aria-label="结尾"><svg><use href="#p-last"/></svg></button>
                        <button aria-label="录音"><svg><use href="#p-rec"/></svg></button>
                    </div>
                    <div class="pad zoom">
                        <button aria-label="放大"><svg><use href="#z-in"/></svg></button>
                        <button aria-label="缩小"><svg><use href="#z-out"/></svg></button>
                        <button aria-label="全部"><svg><use href="#z-full"/></svg></button>
                        <button aria-label="垂直放大"><svg><use href="#z-vin"/></svg></button>
                        <button aria-label="缩放到选区"><svg><use href="#z-sel"/></svg></button>
                        <button aria-label="选区左侧"><svg><use href="#z-left"/></svg></button>
                        <button aria-label="选区右侧"><svg><use href="#z-right"/></svg></button>
                        <button aria-label="垂直缩小"><svg><use href="#z-vout"/></svg></button>
                    </div>
                    <div class="pad clock">0:00.563</div>
                    <div class="pad range">
                        <table>
                            <tr><th></th><th>始</th><th>尾</th><th>长度</th></tr>
                            <tr><th>选</th><td>0:00.563</td><td>0:01.099</td><td>0:00.536</td></tr>
                            <tr><th>查看</th><td>0:00.000</td><td>0:01.099</td><td>0:01.100</td></tr>
                        </table>
                    </div>
                </div>

                <div class="meter">
                    <div class="level"></div>
                    <ol><li class="unit">dB</li><li>-72</li><li>-69</li><li>-66</li><li>-63</li><li>-60</li><li>-57</li><li>-54</li><li>-51</li><li>-48</li><li>-45</li><li>-42</li><li>-39</li><li>-36</li><li>-33</li><li>-30</li><li>-27</li><li>-24</li><li>-21</li><li>-18</li><li>-15</li><li>-12</li><li>-9</li><li>-6</li><li>-3</li><li>0</li></ol>
                </div>

                <footer class="status">
                    <p>已停止</p>
                    <span class="c1">-2.4dB @ &nbsp; 0:00.910</span>
                    <span class="c2">16000 ?16-bit ?Mono</span>
                    <span class="c3">34 K</span>
                    <span class="c4">68.89 GB free</span>
                </footer>
            </div>
        </section>

        <footer class="taskbar">
            <button class="start" aria-label="开始"><svg><use href="#b-orb"/></svg></button>
            <button aria-label="Internet Explorer"><svg><use href="#b-ie"/></svg></button>
            <button class="open" aria-label="资源管理器"><svg><use href="#b-folder"/></svg></button>
            <button class="open" aria-label="Chrome"><svg><use href="#b-chrome"/></svg></button>
            <button aria-label="IE"><svg><use href="#b-ie"/></svg></button>
            <button class="open" aria-label="录屏"><svg><use href="#b-rec"/></svg></button>
            <button class="open active" aria-label="Cool Edit Pro"><svg><use href="#logo"/></svg></button>
            <button class="open" aria-label="Notepad++"><svg><use href="#b-npp"/></svg></button>
            <button class="open" aria-label="Excel"><svg><use href="#b-excel"/></svg></button>
            <div class="tray">
                <svg viewBox="0 0 16 16"><path d="M1 7h14v7H1z" fill="#d8d8d8"/><path d="M2 9h12M2 11h12M4 13h8" stroke="#555" stroke-dasharray="1 1"/><path d="M4 6q0-2 3-2t5-3" stroke="#ccc" fill="none"/></svg>
                <svg class="lang" viewBox="0 0 9 16"><path d="M3 1h5v3H3zM1 3h5v3H1z" fill="#2a5a90" stroke="#fff"/><path d="M2 12h5l-2.500 3z" fill="#fff"/></svg>
                <svg class="arrow" viewBox="0 0 8 8"><path d="M0 6h8L4 2z" fill="#fff"/></svg>
                <svg class="avira" viewBox="0 0 16 16"><path d="M0 0h16v16H0z" fill="#d81118"/><path d="M3 10q0-6 5-7 5 1 5 4-5-2-10 3zM8 6l-2 6M8 6q1 5 5 6" stroke="#fff" fill="none" stroke-width="1.300"/></svg>
                <svg viewBox="0 0 16 16"><path d="M6 2H2v12h7" stroke="#fff" stroke-width="2" fill="none"/><path d="M3 5h3v7H3z" fill="#fff"/><path d="M7 5h7v4q0 2-2 2v4H9v-4q-2 0-2-2zM8 1h1v4H8zM12 1h1v4h-1z" fill="#fff"/></svg>
                <svg viewBox="0 0 16 16"><path d="M1 11h2v3H1zM4 10h2v4H4zM7 8h2v6H7zM10 5h2v9h-2zM13 2h2v12h-2z" fill="#fff"/></svg>
                <svg viewBox="0 0 16 16"><path d="M2 5h3l4-4v14l-4-4H2z" fill="#fff"/><path d="M11 5q2 3 0 6" stroke="#fff" fill="none"/></svg>
                <time><span>15:21</span><span>2019/10/29</span></time>
            </div>
            <button class="peek" aria-label="显示桌面"></button>
        </footer>
    </div>
    <script src="wave.js"></script>
</body>
</html>
```

FILE: styles.css
```css
* {
    margin: 0;
    padding: 0;
    box-sizing: border-box;
}

body {
    font: 12px/16px "Open Sans", "Noto Sans CJK SC", sans-serif;
    color: #000;
    overflow: hidden;
}

button, input, select {
    font: inherit;
    color: inherit;
    background: none;
    border: 0;
}

a {
    color: inherit;
    text-decoration: none;
}

ul, ol {
    list-style: none;
}

i {
    font-style: normal;
}

svg {
    display: block;
    flex: none;
    width: 16px;
    height: 16px;
}

.sprite {
    position: absolute;
    width: 0;
    height: 0;
}

.desktop {
    position: relative;
    height: 100vh;
    overflow: hidden;
    background:
        radial-gradient(ellipse 420px 330px at 21% 86%, #9aeafa 0, #52cff6 45%, rgba(30, 160, 240, 0) 100%),
        radial-gradient(ellipse 700px 260px at 42% 84%, #2cb5fa 0, rgba(10, 120, 230, 0) 100%),
        linear-gradient(to bottom, rgba(2, 48, 140, .8) 0, rgba(0, 80, 190, .3) 40%, transparent 75%),
        linear-gradient(to right, #009cf5 0, #0a98f2 45%, #0067d4 75%, #003f8c 100%);
}

.wallpaper {
    position: absolute;
    left: 0;
    top: 0;
    width: 100%;
    height: 100%;
    filter: blur(1px);
}

.shortcuts {
    position: absolute;
    left: 0;
    bottom: 69px;
    display: grid;
    grid-template-columns: repeat(3, 75px);
    row-gap: 19px;
    color: #fff;
    text-align: center;
    text-shadow: 1px 1px 2px #000, 0 1px 2px #000;
    white-space: nowrap;
}

.shortcuts .pic {
    position: relative;
    display: block;
    width: 36px;
    margin: 0 auto 2px;
}

.shortcuts .pic svg {
    width: 36px;
    height: 36px;
}

.shortcuts .pic .link {
    position: absolute;
    left: 0;
    bottom: 0;
    width: 16px;
    height: 16px;
}

/* 窗口公用 */
.win-buttons {
    display: flex;
    border: 1px solid #d0def0;
    border-top: 0;
    border-radius: 0 0 5px 5px;
    overflow: hidden;
}

.win-buttons button {
    display: grid;
    place-items: center;
    width: 27px;
    height: 17px;
    background: linear-gradient(#7d9ccc, #4f78b2 45%, #2f5c9c 50%, #4a7bbb);
    border-right: 1px solid #b9cbe4;
}

.win-buttons .wide {
    width: 44px;
    border-right: 0;
}

.win-buttons .red {
    background: linear-gradient(#df9a8c, #c4523e 45%, #a82410 50%, #c8543a);
}

.win-buttons svg {
    width: 12px;
    height: 10px;
}

.menu {
    display: flex;
    flex: none;
    align-items: center;
    gap: 15px;
    padding: 0 7px;
    background: linear-gradient(#fff, #e9edf8 45%, #d6dcee 55%, #dde2f2);
    white-space: nowrap;
}

/* 资源管理器 */
.explorer {
    position: absolute;
    left: 8px;
    top: 8px;
    bottom: 162px;
    width: 850px;
    display: flex;
    flex-direction: column;
    padding: 0 5px 6px;
    border: 1px solid #162c4e;
    border-radius: 7px;
    background:
        linear-gradient(to bottom, transparent 100px, #1a9bf0 500px),
        linear-gradient(to right, #3a74b8 0, #1c5eb2 20%, #1a5aae 45%, #5b92cf 75%, #4f86c4 100%);
    box-shadow: inset 0 0 0 1px #a5cdf2, 0 2px 10px 2px rgba(0, 0, 0, .6);
}

.ex-glass {
    position: relative;
    height: 64px;
    flex: none;
}

.ghosts {
    position: absolute;
    left: 0;
    top: 0;
    width: 300px;
    height: 32px;
    filter: blur(3px);
}

.ex-glass .win-buttons {
    width: 100px;
    margin: 0 2px 0 auto;
}

.ex-address {
    display: flex;
    align-items: center;
    margin-top: 13px;
    height: 26px;
    padding-left: 2px;
}

.ex-address .round {
    width: 28px;
    height: 26px;
}

.round svg {
    width: 26px;
    height: 26px;
}

.ex-address .drop {
    width: 14px;
    color: #b9dcf8;
    text-align: center;
}

.crumbs {
    display: flex;
    align-items: center;
    width: 516px;
    height: 24px;
    padding-left: 2px;
    border: 1px solid #dce9f7;
    outline: 1px solid #37618f;
    background: linear-gradient(to right, #c6d6e8, #a9c4e0);
    color: #5a6877;
    font-size: 13px;
}

.crumbs svg {
    margin-right: 1px;
}

.crumbs a::before {
    content: "";
    display: inline-block;
    margin: 0 10px 0 8px;
    border: 4px solid transparent;
    border-left-color: #111;
    border-right: 0;
}

.crumbs .end {
    margin-left: auto;
    padding-right: 14px;
    color: #123;
}

.crumbs i:last-child {
    padding-right: 8px;
    color: #1d5d9c;
}

.search {
    width: 242px;
    height: 24px;
    margin-left: 6px;
    padding: 0 10px;
    border: 1px solid #dce9f7;
    outline: 1px solid #37618f;
    background: #a9c4e0;
    font-style: italic;
}

.search::placeholder {
    color: #4a5a6c;
}

.ex-client {
    display: flex;
    flex-direction: column;
    flex: 1;
    min-height: 0;
    outline: 1px solid #24456e;
    background: #fcfcfc;
}

.ex-client .menu {
    height: 22px;
    padding: 0 10px;
    gap: 17px;
}

.ex-tools {
    display: flex;
    align-items: center;
    height: 33px;
    flex: none;
    padding-left: 18px;
    gap: 31px;
    border-bottom: 1px solid #a6b8cf;
    background: linear-gradient(#fbfdff, #e6f0fa 45%, #dce7f5 50%, #d9e6f5);
    color: #1e395b;
}

.ex-tools button {
    display: flex;
    align-items: center;
    gap: 6px;
}

.ex-tools .play svg {
    margin-right: -2px;
}

.ex-tools b {
    border: 4px solid transparent;
    border-top-color: #1e395b;
    border-bottom: 0;
}

.ex-body {
    display: flex;
    flex: 1;
    min-height: 0;
}

.tree {
    width: 141px;
    padding: 8px 0 0 1px;
    overflow: hidden;
}

.tree li {
    display: flex;
    align-items: center;
    gap: 5px;
    height: 23px;
    padding-left: 28px;
    border: 1px solid transparent;
    border-radius: 2px;
    white-space: nowrap;
}

.tree .root {
    padding-left: 18px;
}

.tree .on, .files .on {
    border-color: #d6d6d6;
    background: linear-gradient(#fafafa, #e6e6e6);
}

.scroll {
    display: flex;
    flex-direction: column;
    align-items: center;
    width: 17px;
    background: #f0f0f0;
}

.scroll i {
    margin: 7px;
    border: 4px solid transparent;
}

.scroll .up {
    border-bottom-color: #444;
    border-top: 0;
}

.scroll .down {
    margin-top: auto;
    border-top-color: #444;
    border-bottom: 0;
}

.scroll span {
    display: grid;
    place-items: center;
    width: 15px;
    height: 361px;
    border: 1px solid #8f8f8f;
    border-radius: 2px;
    background: linear-gradient(to right, #f5f5f5, #dedede 45%, #c4c4c4 55%, #b5b5b5);
}

.scroll b {
    width: 8px;
    height: 8px;
    background: repeating-linear-gradient(#555 0 2px, transparent 2px 3px);
}

.files {
    flex: 1;
    padding-left: 15px;
    border-left: 1px solid #dbe6f3;
}

.files-head {
    display: flex;
    height: 33px;
    color: #4c607a;
}

.files-head span {
    width: 146px;
    height: 25px;
    padding: 5px 3px;
    border-right: 1px solid #e1e6ee;
}

/* 排序箭头 */
.files-head span:first-child {
    background: conic-gradient(from 135deg at 50% 0, #7fa6c8 90deg, transparent 0) 66px 1px / 8px 4px no-repeat;
}

.files-head span:last-child {
    padding-left: 6px;
}

.files a {
    display: flex;
    align-items: center;
    gap: 3px;
    height: 21px;
    padding-left: 4px;
    border: 1px solid transparent;
    border-radius: 3px;
}

.details {
    display: flex;
    gap: 20px;
    height: 54px;
    flex: none;
    padding: 6px 0 0 25px;
    border-top: 1px solid #c5d3e6;
    background: linear-gradient(#eaf1fa, #f1f5fb);
    color: #5a6b84;
    line-height: 18px;
}

.details .big {
    width: 32px;
    height: 40px;
    margin-top: 2px;
}

.details strong {
    display: block;
    color: #000;
    font-weight: 400;
    font-size: 13px;
}

.details dl {
    display: grid;
    grid-template-columns: 32px auto;
    align-content: start;
    margin-left: -14px;
}

.details dd {
    color: #1e395b;
}

.stars {
    display: flex;
    gap: 1px;
    align-items: center;
}

/* Cool Edit Pro 主窗口 */
.cool {
    position: absolute;
    left: 363px;
    top: 54px;
    right: -13px;
    bottom: 165px;
    display: flex;
    flex-direction: column;
    padding: 0 6px 4px;
    border: 1px solid #0e1c30;
    border-radius: 8px;
    background:
        linear-gradient(transparent 30px, rgba(160, 205, 245, .9) 200px) left / 6px 100% no-repeat,
        linear-gradient(to right, #a9cdf0 0, #9cc4ec 45%, #3474b4 52%, #2a64a4 100%) bottom / 100% 10px no-repeat,
        linear-gradient(to bottom, rgba(255, 255, 255, .3), transparent 9px, rgba(40, 90, 160, .25) 14px, transparent 18px) top / 100% 28px no-repeat,
        linear-gradient(to right, #c5d8ee 0, #aac8ea 22%, #a4c4e8 47%, #2a5b94 50%, #1f4c86 66%, #1c4880 83%, #5c83b2 95%);
    box-shadow: inset 0 0 0 1px #d8ebfb, 0 2px 12px 3px rgba(0, 0, 0, .7);
}

.cool-title {
    display: flex;
    align-items: center;
    gap: 5px;
    height: 28px;
    flex: none;
}

.cool-title h1 {
    font-size: 12px;
    font-weight: 400;
}

.cool-title .win-buttons {
    align-self: flex-start;
    margin: 0 -4px 0 auto;
}

.cool-client {
    display: flex;
    flex-direction: column;
    flex: 1;
    min-height: 0;
    background: #626c7a;
    outline: 1px solid #23354d;
}

.cool .menu {
    height: 20px;
}

.toolbar {
    display: flex;
    height: 34px;
    flex: none;
    padding: 2px 1px 1px;
    border-top: 1px solid #8d949e;
    border-bottom: 1px solid #9aa3af;
    background: #4a525d;
}

.group {
    display: flex;
    align-items: center;
    padding: 0 5px 0 6px;
    border: 1px solid;
    border-color: #8b94a1 #2b3139 #2b3139 #8b94a1;
    background: #59626f;
}

.group:nth-child(n + 2) {
    padding-left: 5px;
}

.toolbar button, .tab-tools button {
    display: grid;
    place-items: center;
    width: 23px;
    height: 24px;
    flex: none;
    border: 1px solid;
    border-color: #f4f4f2 #16191d #16191d #f4f4f2;
    border-bottom-width: 2px;
    background: linear-gradient(135deg, #e9e9e7, #a9a9a7);
}

.toolbar .down, .tab-tools .down {
    border-color: #111 #fff #fff #111;
    background: linear-gradient(135deg, #c9c9c7, #b5b5b3);
}

.toolbar svg, .tab-tools svg {
    width: 18px;
    height: 18px;
}

.toolbar .multi {
    width: 51px;
    margin-right: 7px;
}

.toolbar .multi svg {
    width: 48px;
    height: 20px;
}

.main {
    display: flex;
    flex: 1;
    min-height: 0;
}

.organizer {
    display: flex;
    flex-direction: column;
    width: 201px;
    padding: 1px 5px 4px 6px;
    border-right: 4px solid #7b8592;
    outline: 1px solid #39414b;
    outline-offset: -1px;
    background: #545d69;
}

.tabs {
    display: flex;
    align-items: flex-end;
    gap: 3px;
    padding-top: 8px;
    border-top: 5px double #99a2ae;
    color: #c6ccd4;
}

.tabs button {
    width: 45px;
    height: 16px;
    border: 1px solid;
    border-color: #a4adb9 #2a3038 transparent #a4adb9;
    background: linear-gradient(#8290ab, #5d6880);
    line-height: 14px;
    text-align: left;
    padding-left: 5px;
}

.tabs .on {
    width: 39px;
    height: 18px;
    background: #5d6774;
    color: #fff;
}

.tabs button:last-child {
    width: 51px;
}

.tab-body {
    display: flex;
    flex-direction: column;
    flex: 1;
    padding: 7px 7px 5px;
    border: 1px solid;
    border-color: #a4adb9 #2a3038 #2a3038 #a4adb9;
    border-right-width: 2px;
    background: #5d6774;
    color: #fff;
}

.tab-tools {
    display: flex;
    gap: 7px;
    margin-bottom: 6px;
}

.tab-tools span {
    display: flex;
}

.wave-list, .sunken {
    flex: 1;
    border: 2px solid;
    border-color: #2b3139 #98a1ad #98a1ad #2b3139;
    background: #424953;
}

.wave-list {
    padding-top: 1px;
}

.wave-list li {
    display: flex;
    align-items: center;
    height: 16px;
    padding: 0 3px 0 2px;
    gap: 1px;
}

.wave-list svg, .types svg {
    width: 14px;
    height: 12px;
}

.wave-list span {
    flex: 1;
    padding-left: 2px;
    white-space: nowrap;
    overflow: hidden;
    line-height: 16px;
}

.wave-list .on span {
    background: #f0eeee;
    color: #000;
}

.filter {
    display: flex;
    gap: 7px;
    height: 84px;
    padding-top: 4px;
}

.types, .sort {
    display: flex;
    flex-direction: column;
    width: 82px;
    white-space: nowrap;
}

.types p, .sort > label {
    height: 18px;
}

.sunken {
    padding-top: 1px;
}

.types label {
    display: flex;
    align-items: center;
    gap: 3px;
    height: 16px;
    padding-left: 3px;
}

.types input {
    appearance: none;
    width: 12px;
    height: 12px;
    border: 1px solid #222;
    background: #fff;
}

.types input:checked::before {
    content: "×";
    display: block;
    color: #000;
    font: bold 15px/9px "Liberation Sans", sans-serif;
    text-align: center;
}

.combo {
    position: relative;
    height: 20px;
    margin-bottom: 4px;
    border: 2px solid;
    border-color: #2b3139 #e4e4e4 #e4e4e4 #2b3139;
    background: #424953;
}

.combo select {
    appearance: none;
    width: 61px;
    height: 16px;
    padding-left: 2px;
    color: #fff;
    overflow: hidden;
}

.combo::after {
    content: "";
    position: absolute;
    right: 0;
    top: 0;
    width: 16px;
    height: 16px;
    background: linear-gradient(#000, #000) 4px 6px / 8px 1px no-repeat, linear-gradient(#000, #000) 5px 7px / 6px 1px no-repeat, linear-gradient(#000, #000) 6px 8px / 4px 1px no-repeat, linear-gradient(#000, #000) 7px 9px / 2px 1px no-repeat, #e8e8e6;
}

.sort button {
    height: 17px;
    margin-bottom: 3px;
    border: 1px solid;
    border-color: #a4b0c4 #2a3038 #2a3038 #a4b0c4;
    background: linear-gradient(#7c88a0, #5b667c);
    color: #c9ced6;
    font-size: 10px;
    line-height: 13px;
}

.editor {
    display: grid;
    grid-template-columns: 1fr 41px;
    grid-template-rows: 11px 7px 5px 1fr 19px 5px;
    flex: 1;
    min-width: 0;
    padding: 5px 0 2px 8px;
    font: 10px/14px "Liberation Sans", sans-serif;
    color: #e8e8e8;
}

.editor > * {
    grid-column: 1;
}

.view-bar {
    border: 1px solid #7fc8a8;
    background: #123a28;
}

.view-bar i {
    display: block;
    width: 51%;
    height: 100%;
    background: #4cf4a8;
}

.marks, .wave {
    grid-row: 3;
    width: 100%;
    height: 5px;
}

.wave {
    grid-row: 4;
    height: 100%;
    min-height: 0;
    background: #000;
}

.amp {
    grid-column: 2;
    grid-row: 4;
    background: #424953;
    text-shadow: 1px 1px 0 #111;
}

.amp li {
    height: 21px;
    padding-left: 4px;
    line-height: 21px;
    white-space: nowrap;
    background:
        linear-gradient(#ddd, #ddd) 0 10px / 3px 1px no-repeat,
        repeating-linear-gradient(#aaa 0 1px, transparent 1px 20%) left / 2px 100% no-repeat;
}

.amp .unit {
    height: 23px;
    line-height: 12px;
}

.time {
    grid-row: 5;
    border-top: 1px solid #d6dade;
    border-bottom: 1px solid #99a2ad;
    background: #424953;
    text-shadow: 1px 1px 0 #111;
}

.time svg {
    width: 100%;
    height: 4px;
}

.time ol {
    display: flex;
    line-height: 11px;
}

.time li {
    flex: 1;
    width: 0;
    text-align: center;
}

.time .first, .time .last {
    flex: 0 0 17px;
    text-indent: 1px;
}

.time .last {
    text-indent: -2px;
}

.marks.bottom {
    grid-row: 6;
}

.dock {
    display: flex;
    height: 66px;
    flex: none;
    padding: 3px 0 2px;
    border-top: 2px solid #8b94a0;
    border-bottom: 1px solid #2b3139;
    box-shadow: inset 0 1px 0 #2b3139, inset 0 -1px 0 #9aa3af;
}

.pad {
    display: grid;
    align-content: center;
    padding-left: 13px;
    border-right: 3px solid #7f8996;
    box-shadow: 1px 0 0 #2b3139, inset -1px 0 0 #b0b8c2;
    background:
        linear-gradient(#a9b1bc, #a9b1bc) 2px 4px / 1px 52px no-repeat,
        linear-gradient(#a9b1bc, #a9b1bc) 5px 4px / 1px 52px no-repeat;
}

.pad button {
    display: grid;
    place-items: center;
    height: 23px;
    border: 1px solid;
    border-color: #f4f4f2 #16191d #16191d #f4f4f2;
    border-bottom-width: 2px;
    background: linear-gradient(160deg, #eee, #a9a9a7);
}

.pad button svg {
    width: 20px;
    height: 18px;
}

.transport {
    grid-template-columns: repeat(5, 29px);
    width: 169px;
}

.zoom {
    grid-template-columns: repeat(3, 29px) 36px;
    width: 145px;
}

.zoom button:nth-child(4n) {
    margin-left: 7px;
}

.clock {
    flex: 1;
    padding: 0 0 0 32px;
    place-content: center;
    text-align: center;
    color: #f3f3f3;
    font: 46px/52px "Liberation Sans", sans-serif;
    text-shadow: 2px 2px 0 #39414b;
}

.range {
    width: 266px;
    padding-left: 10px;
    border-right: 0;
}

.range table {
    border-spacing: 3px 3px;
    line-height: 14px;
    color: #f0f0f0;
    text-shadow: 1px 1px 0 #39414b;
}

.range th {
    height: 12px;
    font-weight: 400;
    line-height: 12px;
    text-align: left;
}

.range th:first-child {
    width: 27px;
    text-align: right;
    white-space: nowrap;
}

.range td {
    width: 72px;
    height: 17px;
    padding-left: 7px;
    border: 1px solid;
    border-color: #2b3139 #b4bcc6 #b4bcc6 #2b3139;
    background: #424953;
    font-family: "Liberation Sans", sans-serif;
}

.meter {
    height: 41px;
    flex: none;
    padding: 4px 1px 0 13px;
    border-top: 1px solid #2b3139;
    background:
        linear-gradient(#a9b1bc, #a9b1bc) 2px 5px / 1px 32px no-repeat,
        linear-gradient(#a9b1bc, #a9b1bc) 5px 5px / 1px 32px no-repeat;
    font: 10px/12px "Liberation Sans", sans-serif;
    color: #c4cad2;
    text-shadow: 1px 1px 0 #333a44;
}

.level {
    height: 15px;
    background: linear-gradient(#aaa, #aaa) calc(100% - 17px) 0 / 1px 100% no-repeat, #000;
    border-left: 1px solid #e6e44a;
    border-bottom: 1px solid #b9c0c9;
}

.meter ol {
    display: flex;
    padding-top: 1px;
}

.meter li {
    flex: 1;
    width: 0;
    padding-top: 1px;
    text-align: center;
    background: linear-gradient(#c4cad2, #c4cad2) center top / 1px 3px no-repeat;
}

.meter .unit {
    flex: 0 0 20px;
    text-align: left;
    background: none;
}

.status {
    display: flex;
    align-items: center;
    height: 22px;
    flex: none;
    gap: 2px;
    background: #f0f0f0;
    font: 11px/16px "Liberation Sans", sans-serif;
}

.status p {
    flex: 1;
    padding-left: 2px;
    font: 12px/16px "Noto Sans CJK SC", sans-serif;
}

.status span {
    height: 18px;
    padding-left: 4px;
    border: 1px solid;
    border-color: #9a9a9a #fff #fff #9a9a9a;
    white-space: nowrap;
}

.status .c1 {
    width: 135px;
}

.status .c2 {
    width: 125px;
}

.status .c3 {
    width: 66px;
    padding-left: 8px;
}

.status .c4 {
    width: 98px;
}

/* 任务栏 */
.taskbar {
    position: absolute;
    left: 0;
    right: 0;
    bottom: 0;
    display: flex;
    gap: 2px;
    height: 40px;
    border-top: 1px solid #12304e;
    box-shadow: inset 0 1px 0 rgba(255, 255, 255, .45);
    background: linear-gradient(to right, #266093 0, #3d83b4 12%, #4a9bcb 24%, #3f8fc9 42%, #2d73b2 60%, #21568f 78%, #1b4679 100%);
}

.taskbar > button {
    display: grid;
    place-items: center;
    width: 60px;
    border-radius: 3px;
}

.taskbar > .start {
    width: 57px;
    padding-right: 4px;
}

.taskbar .open {
    border: 1px solid #17395c;
    box-shadow: inset 0 0 0 1px rgba(255, 255, 255, .55);
    background: linear-gradient(rgba(255, 255, 255, .4), rgba(255, 255, 255, .15));
}

.taskbar .active {
    background: linear-gradient(135deg, rgba(255, 255, 255, .85), rgba(255, 255, 255, .4));
}

.taskbar > button svg {
    width: 32px;
    height: 32px;
}

.taskbar .start svg {
    width: 38px;
    height: 38px;
}

.tray {
    display: flex;
    align-items: center;
    gap: 8px;
    margin-left: auto;
    color: #fff;
}

.tray .lang {
    width: 9px;
    margin: 8px 3px 0;
    align-self: flex-start;
}

.tray .arrow {
    width: 8px;
    height: 8px;
}

.tray .avira {
    margin-left: 28px;
}

.tray time {
    width: 74px;
    text-align: center;
    line-height: 18px;
}

.tray time span {
    display: block;
}

.taskbar > .peek {
    width: 14px;
    border: 1px solid #8fa9c4;
    border-radius: 0;
    background: linear-gradient(135deg, #5c7fa5, #1a3f6c 50%);
}
```

FILE: wave.js
```js
// x, 上峰, 上主体, 下主体, 下峰
var ENV = [
    [0, 1, 1, 1, 1], [13, 4, 3, 4, 5], [29, 12, 7, 8, 12], [36, 15, 9, 8, 12], [44, 15, 12, 12, 17],
    [47, 28, 18, 10, 35], [53, 54, 25, 11, 50], [59, 59, 32, 10, 77], [63, 61, 32, 9, 80], [74, 65, 30, 8, 62],
    [81, 61, 25, 8, 55], [89, 50, 20, 8, 45], [97, 55, 19, 7, 52], [102, 48, 20, 7, 60], [106, 33, 15, 6, 44],
    [110, 28, 12, 5, 34], [113, 10, 8, 5, 15], [119, 9, 5, 4, 12], [133, 9, 6, 4, 12], [138, 17, 10, 5, 22],
    [144, 27, 15, 6, 50], [149, 40, 20, 8, 70], [156, 51, 28, 11, 81], [166, 57, 30, 10, 75], [174, 60, 30, 9, 80],
    [183, 74, 32, 9, 95], [189, 77, 38, 10, 98], [194, 78, 36, 10, 92], [206, 83, 28, 10, 83], [214, 80, 28, 10, 75],
    [224, 70, 25, 9, 65], [238, 61, 20, 8, 42], [246, 45, 16, 7, 35], [254, 31, 12, 6, 30], [258, 17, 9, 5, 25],
    [263, 10, 6, 4, 13], [268, 4, 3, 3, 6], [274, 2, 1, 1, 2], [376, 1, 1, 1, 1], [385, 0, 0, 0, 0],
    [422, 0, 0, 0, 0], [426, 2, 1, 2, 4], [434, 8, 5, 4, 15], [438, 18, 8, 7, 22], [443, 28, 18, 12, 36],
    [448, 48, 32, 18, 43], [453, 61, 40, 24, 62], [457, 76, 44, 20, 78], [463, 63, 25, 12, 85], [473, 66, 38, 20, 94],
    [478, 65, 38, 20, 93], [483, 57, 40, 20, 80], [486, 53, 44, 22, 74], [491, 40, 36, 18, 70], [496, 25, 15, 12, 50],
    [501, 15, 7, 7, 25], [508, 10, 4, 4, 12], [514, 6, 3, 3, 6], [521, 3, 1, 2, 3], [541, 1, 1, 1, 1],
    [551, 3, 1, 2, 3], [556, 9, 5, 4, 10], [561, 22, 12, 5, 35], [566, 36, 16, 8, 50], [571, 62, 20, 9, 82],
    [578, 73, 25, 10, 80], [584, 88, 32, 12, 88], [591, 93, 36, 22, 88], [601, 98, 32, 24, 82], [608, 106, 34, 18, 72],
    [614, 110, 40, 16, 62], [616, 122, 44, 16, 72], [626, 118, 46, 20, 66], [634, 108, 38, 26, 58], [644, 98, 32, 16, 52],
    [653, 76, 24, 12, 66], [663, 70, 28, 12, 66], [671, 50, 25, 9, 52], [679, 40, 16, 8, 42], [691, 28, 13, 6, 36],
    [703, 22, 9, 5, 25], [714, 13, 5, 4, 15], [728, 9, 3, 3, 12], [738, 5, 2, 2, 6], [749, 1, 1, 1, 1], [752, 0, 0, 0, 0]
];
var MID = 138;
var SEL = 385;
var STEP = 34.1;
var seed = 7;

function rnd() {
    seed = (seed * 16807) % 2147483647;
    return seed / 2147483647;
}

function env(x) {
    var i = 0;
    while (i < ENV.length - 2 && ENV[i + 1][0] <= x) i++;
    var a = ENV[i], b = ENV[i + 1], t = (x - a[0]) / (b[0] - a[0]);
    return a.map(function (v, k) { return v + (b[k] - v) * t; });
}

function columns(from, to, period, fill) {
    var d = '';
    for (var x = from; x < to; x++) {
        var e = env(x), ph = x % period;
        var top = ph < 1 ? e[1] * (0.93 + rnd() * 0.07) : e[2] * (0.65 + rnd() * 0.6);
        var low = ph >= 2 && ph < 3 ? e[4] * (0.93 + rnd() * 0.07) : e[3] * (0.5 + rnd() * 0.9);
        if (ph >= 3 && rnd() < fill) low = e[4] * (0.6 + rnd() * 0.3);
        if (ph >= 1 && ph < 2 && rnd() < 0.25) top = e[1] * 0.6;
        d += 'M' + (x + 0.5) + ' ' + (MID - Math.round(top)) + 'V' + (MID + 1 + Math.round(low));
    }
    return d;
}

function path(d, color) {
    return '<path d="' + d + '" stroke="' + color + '" fill="none" shape-rendering="crispEdges"/>';
}

function grid(from, to, color) {
    var d = '';
    for (var k = 0; k < 23; k++) {
        var x = Math.round(k * STEP) + 0.5;
        if (x >= from && x < to) d += 'M' + x + ' 0V278';
    }
    for (var y = 12.5; y < 278; y += 21) d += 'M' + from + ' ' + y + 'H' + to;
    return path(d, color);
}

document.getElementById('wave').innerHTML =
    grid(0, SEL, '#0b3a10') +
    '<path d="M385 0h367v278H385z" fill="#eeeef7"/>' +
    grid(SEL, 752, '#c3cbc9') +
    path('M0 15.5H385M0 263.5H385', '#f2fff2') +
    path('M385 15.5H752M385 263.5H752', '#fff') +
    path(columns(0, SEL, 3.75, 0.7), '#4cf4a8') +
    path(columns(SEL, 752, 3.5, 0.95), '#123a28') +
    path('M0 138.5H385', '#5fb98a') +
    path('M385 138.5H752', '#3a3a28') +
    path('M621 144.5h6M624.5 145v13M621 158.5h6', '#9aa8a0');

var t = '';
for (var i = 0; i <= 110; i++) {
    t += 'M' + (Math.round(i * STEP / 5) + 0.5) + ' 0V' + (i % 5 ? 2 : 5);
}
document.getElementById('ticks').innerHTML = path(t, '#e8e8e8');
```
